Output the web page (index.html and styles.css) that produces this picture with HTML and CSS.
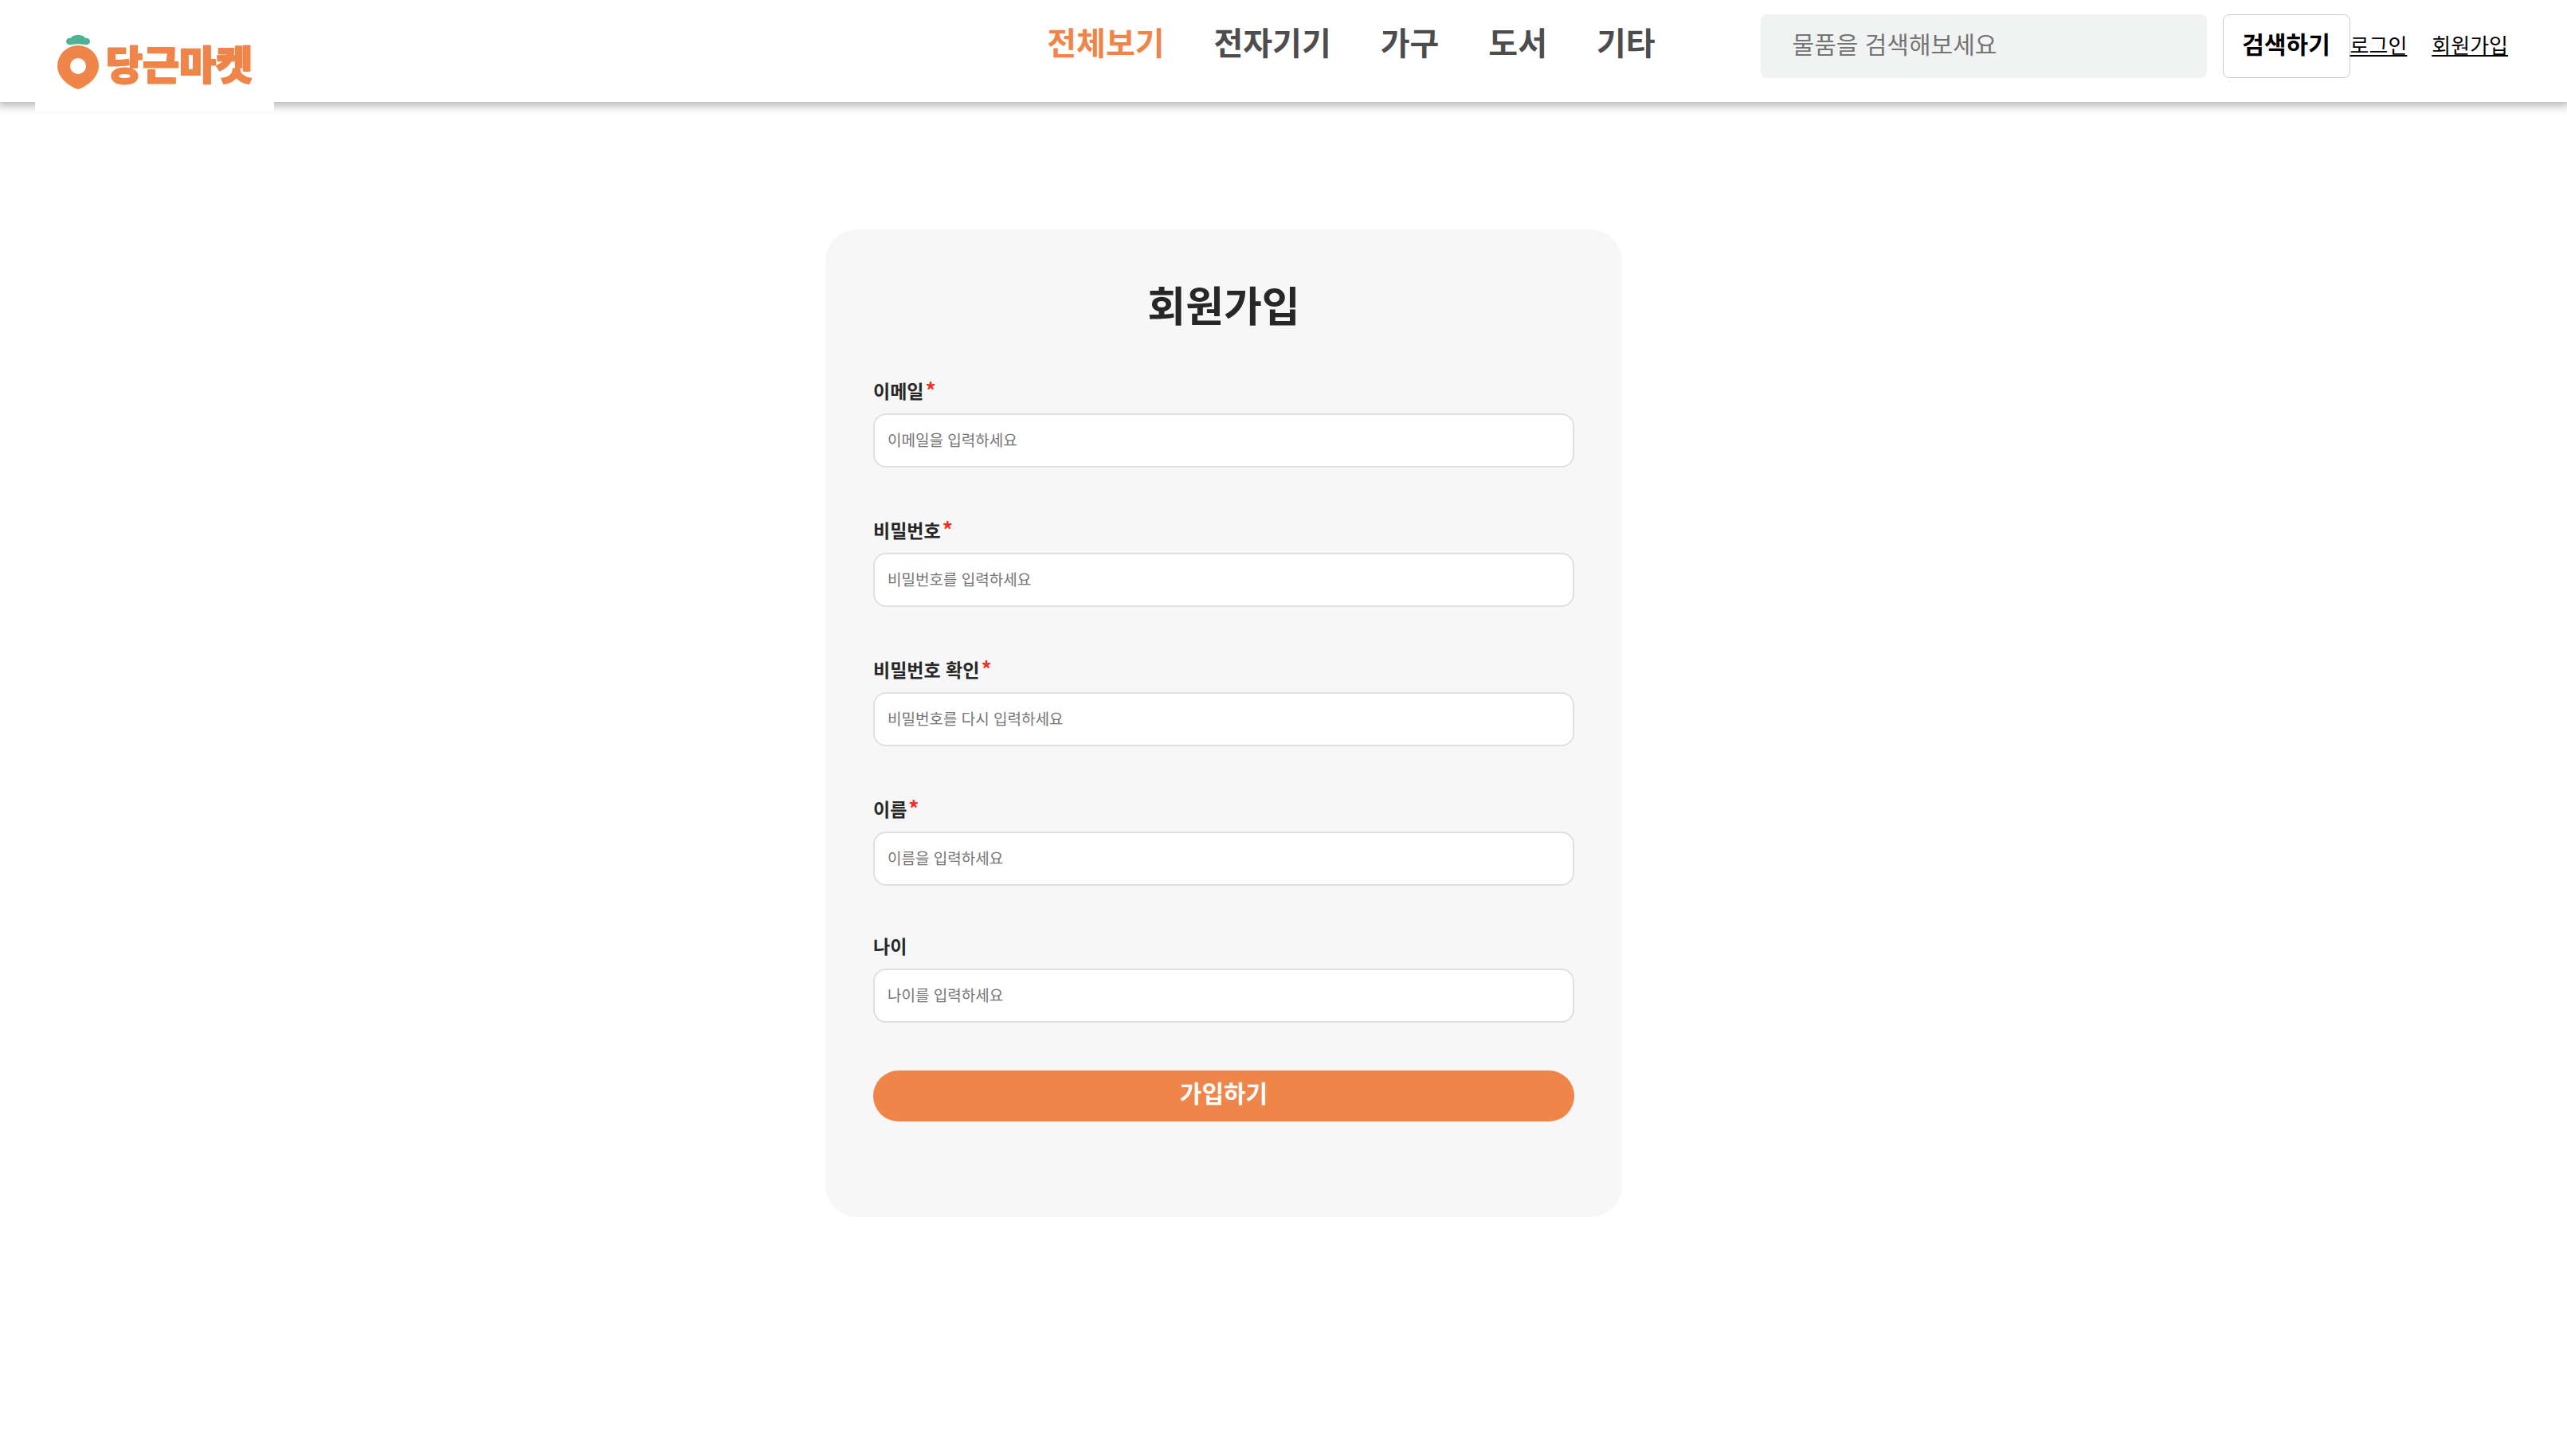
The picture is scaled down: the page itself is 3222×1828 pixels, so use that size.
FILE: index.html
```html
<!DOCTYPE html>
<html lang="ko">

<head>
    <meta charset="UTF-8">
    <meta name="viewport" content="width=device-width, initial-scale=1.0">
    <title>회원가입</title>
    <link rel="stylesheet" href="styles.css">
</head>

<body>
    <header class="header">
        <!-- 로고 -->
        <a href="#" class="logo" aria-label="당근마켓">
            <svg width="300" height="124" viewBox="0 0 300 124">
                <path fill="#4fb295" d="M46 40c-4 1-7-1-7-4 0-3 3-5 6-4 1-3 5-4 9-4s8 1 9 4c3-1 6 1 6 4 0 3-3 5-7 4-5-1-11-1-16 0z" />
                <path fill="#ef8549" fill-rule="evenodd" d="M54 41a26 26 0 0 0-26 26c0 13 13 25 26 29 13-4 26-16 26-29a26 26 0 0 0-26-26zm0 16a10 10 0 1 1 0 20 10 10 0 0 1 0-20z" />
                <text class="logo-text" x="89" y="84">당근마켓</text>
            </svg>
        </a>

        <!-- 카테고리 메뉴 -->
        <nav class="menu">
            <a href="#" class="active">전체보기</a>
            <a href="#">전자기기</a>
            <a href="#">가구</a>
            <a href="#">도서</a>
            <a href="#">기타</a>
        </nav>

        <!-- 검색 -->
        <form class="search">
            <input type="text" placeholder="물품을 검색해보세요" aria-label="물품 검색">
            <button type="submit">검색하기</button>
        </form>

        <div class="user-menu">
            <a href="#">로그인</a>
            <a href="#">회원가입</a>
        </div>
    </header>

    <main class="main">
        <form class="signup">
            <h1>회원가입</h1>

            <div class="field">
                <label for="email">이메일<span class="required">*</span></label>
                <input type="email" id="email" placeholder="이메일을 입력하세요">
            </div>
            <div class="field">
                <label for="password">비밀번호<span class="required">*</span></label>
                <input type="password" id="password" placeholder="비밀번호를 입력하세요">
            </div>
            <div class="field">
                <label for="passwordCheck">비밀번호 확인<span class="required">*</span></label>
                <input type="password" id="passwordCheck" placeholder="비밀번호를 다시 입력하세요">
            </div>
            <div class="field">
                <label for="name">이름<span class="required">*</span></label>
                <input type="text" id="name" placeholder="이름을 입력하세요">
            </div>
            <div class="field">
                <label for="age">나이</label>
                <input type="text" id="age" placeholder="나이를 입력하세요">
            </div>

            <button type="submit" class="submit">가입하기</button>
        </form>
    </main>
</body>

</html>
```

FILE: styles.css
```css
* {
    box-sizing: border-box;
}

body {
    margin: 0;
    background-color: #fff;
    color: #272727;
    font-family: "Noto Sans CJK KR", sans-serif;
}

input,
button {
    font-family: inherit;
}

input::placeholder {
    color: #757575;
    opacity: 1;
}

/* 상단 헤더 */
.header {
    display: flex;
    align-items: flex-start;
    height: 128px;
    padding: 16px 74px 0 44px;
    background-color: #fff;
    box-shadow: 0 0 12px 4px rgba(0, 0, 0, 0.32);
}

/* 로고 이미지가 헤더 그림자를 덮음 */
.logo {
    flex: none;
    background-color: #fff;
}

.logo svg {
    display: block;
}

.logo-text {
    font-size: 50px;
    font-weight: 900;
    fill: #ef8549;
    stroke: #ef8549;
    stroke-width: 2px;
    stroke-linejoin: round;
}

.menu {
    display: flex;
    gap: 62px;
    margin-left: auto;
    margin-right: 132px;
    padding-top: 8px;
}

.menu a {
    font-size: 40px;
    line-height: 56px;
    font-weight: 700;
    color: #4d4d4d;
    text-decoration: none;
    white-space: nowrap;
}

.menu a.active {
    color: #ef8549;
}

/* 검색창 */
.search {
    display: flex;
    gap: 20px;
    padding-top: 2px;
}

.search input {
    width: 560px;
    height: 80px;
    padding: 0 40px 8px;
    border: none;
    border-radius: 8px;
    background-color: #f1f3f2;
    font-size: 30px;
}

.search button {
    width: 160px;
    height: 80px;
    padding: 0 0 8px;
    border: 1px solid #ccc;
    border-radius: 8px;
    background-color: #fff;
    color: #000;
    font-size: 30px;
    font-weight: 700;
}

.user-menu {
    display: flex;
    gap: 31px;
    padding-top: 20px;
}

.user-menu a {
    color: #000;
    font-size: 26px;
    line-height: 40px;
    white-space: nowrap;
}

/* 회원가입 폼 */
.main {
    display: flex;
    justify-content: center;
    padding: 160px 150px 160px 0;
}

.signup {
    display: flex;
    flex-direction: column;
    width: 1000px;
    padding: 56px 60px 120px;
    border-radius: 40px;
    background-color: #f7f7f7;
}

.signup h1 {
    margin: 0 0 52px;
    font-size: 52px;
    line-height: 76px;
    text-align: center;
}

.field {
    display: flex;
    flex-direction: column;
    margin-bottom: 60px;
}

.field label {
    margin-bottom: 14px;
    font-size: 23px;
    line-height: 30px;
    font-weight: 700;
}

.required {
    margin-left: 2px;
    color: #f0301f;
    font-size: 26px;
    line-height: 33px;
}

.field input {
    height: 68px;
    padding: 0 16px 4px;
    border: 2px solid #e0e0e0;
    border-radius: 16px;
    background-color: #fff;
    font-size: 19px;
}

.submit {
    height: 64px;
    padding: 0 0 10px;
    border: none;
    border-radius: 32px;
    background-color: #ef8549;
    color: #fff;
    font-size: 30px;
    font-weight: 700;
}
```
